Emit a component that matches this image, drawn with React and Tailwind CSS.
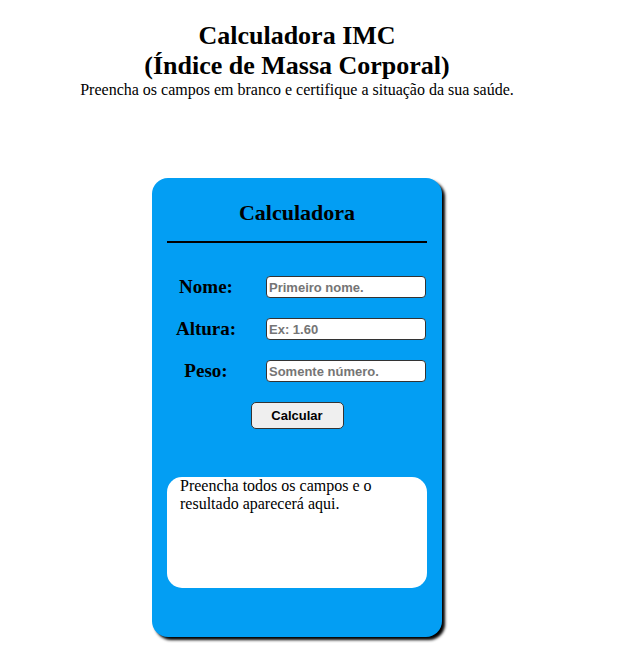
export default function App() {
  const fields = [
    { label: "Nome:", placeholder: "Primeiro nome." },
    { label: "Altura:", placeholder: "Ex: 1.60" },
    { label: "Peso:", placeholder: "Somente número." },
  ];

  return (
    <div className="w-[594px] font-['Liberation_Serif',serif] text-black text-center pt-[21px] pb-[30px]">
      <h1 className="text-[26px] font-bold leading-[30px]">
        Calculadora IMC
        <br />
        (Índice de Massa Corporal)
      </h1>
      <p className="text-[16px] leading-[18px]">
        Preencha os campos em branco e certifique a situação da sua saúde.
      </p>

      <div className="mx-auto mt-[79px] w-[290px] h-[459px] bg-[#039ef3] rounded-[16px] shadow-[3px_3px_3px_#000] px-[15px] pt-[22px]">
        <h2 className="text-[22px] font-bold leading-[25px]">Calculadora</h2>
        <div className="mt-[16px] h-[2px] bg-black" />

        <div className="mt-[33px] flex flex-col gap-[20px]">
          {fields.map((f) => (
            <div key={f.label} className="flex items-center h-[22px]">
              <label className="w-[78px] text-center text-[19px] leading-[22px] font-bold">
                {f.label}
              </label>
              <input
                type="text"
                placeholder={f.placeholder}
                className="ml-[21px] w-[160px] h-[22px] bg-white border border-[#333] rounded-[4px] px-[2px] text-[13px] font-bold font-['Liberation_Sans',sans-serif] placeholder:text-[#757575] outline-none"
              />
            </div>
          ))}
        </div>

        <button className="mt-[20px] w-[93px] h-[27px] bg-[#efefef] border border-[#333] rounded-[5px] text-[13px] leading-[15px] font-bold font-['Liberation_Sans',sans-serif]">
          Calcular
        </button>

        <div className="mt-[48px] h-[111px] bg-white rounded-[15px] pl-[13px] pr-[13px] text-left text-[16px] leading-[18px]">
          Preencha todos os campos e o resultado aparecerá aqui.
        </div>
      </div>
    </div>
  );
}
